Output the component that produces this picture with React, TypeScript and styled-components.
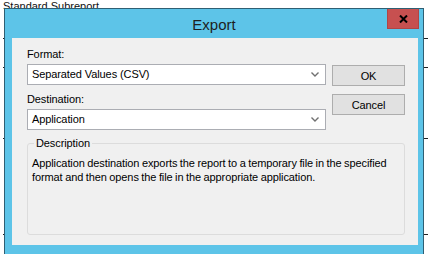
import React from 'react';
import styled, { createGlobalStyle } from 'styled-components';

const GlobalStyle = createGlobalStyle`
  html, body {
    margin: 0;
    padding: 0;
    background: #ffffff;
    overflow: hidden;
  }
  body {
    font-family: 'Liberation Sans', Arial, sans-serif;
  }
`;

const UI_FONT = `'Liberation Sans', Arial, sans-serif`;

const Screen = styled.div`
  position: relative;
  width: 428px;
  height: 254px;
  overflow: hidden;
  background: #ffffff;
`;

/* the report page that sits behind the dialog */
const Backdrop = styled.div`
  display: flex;
  flex-direction: column;
  padding: 0 0 0 3px;
`;

const BackdropTitle = styled.div`
  font-family: 'Liberation Sans', Arial, sans-serif;
  font-size: 11px;
  line-height: 12px;
  color: #111;
`;

const BackdropRow = styled.div<{ h: number }>`
  height: ${(p) => p.h}px;
  border-bottom: 1px solid #222;
`;

const Window = styled.div`
  position: absolute;
  left: 4px;
  top: 8px;
  width: 418px;
  height: 260px;
  border: 1px solid #2f5f73;
  background: #5dc4e8;
  display: flex;
  flex-direction: column;
`;

const TitleBar = styled.div`
  position: relative;
  height: 29px;
  display: flex;
  align-items: center;
  justify-content: center;
`;

const Title = styled.span`
  font-family: 'Liberation Sans', Arial, sans-serif;
  font-size: 15px;
  color: #1e1e1e;
  margin-top: 1px;
`;

const CloseButton = styled.div`
  position: absolute;
  right: 4px;
  top: 0;
  width: 32px;
  height: 20px;
  background: #c75050;
  border: 1px solid #b04545;
  border-top: none;
  box-sizing: border-box;
  display: flex;
  align-items: center;
  justify-content: center;
`;

const Client = styled.div`
  margin-left: 7px;
  width: 406px;
  height: 207px;
  background: #f0f0f0;
  box-sizing: border-box;
  padding: 9px 13px 0 15px;
  display: flex;
  flex-direction: column;
  font-family: ${UI_FONT};
  font-size: 11px;
  letter-spacing: -0.1px;
  color: #000;
`;

const TopSection = styled.div`
  display: flex;
  gap: 6px;
`;

const Fields = styled.div`
  width: 299px;
  display: flex;
  flex-direction: column;
`;

const FieldLabel = styled.label<{ gapBefore?: number }>`
  display: block;
  line-height: 15px;
  margin-top: ${(p) => p.gapBefore ?? 0}px;
  margin-bottom: 2px;
`;

const Combo = styled.div`
  height: 21px;
  box-sizing: border-box;
  border: 1px solid #abadb3;
  background: #ffffff;
  display: flex;
  align-items: center;
  justify-content: space-between;
  padding: 0 6px 0 4px;
`;

const ComboText = styled.span`
  line-height: 15px;
`;

const Buttons = styled.div`
  width: 73px;
  display: flex;
  flex-direction: column;
  gap: 8px;
  padding-top: 18px;
`;

const Button = styled.button`
  height: 21px;
  box-sizing: border-box;
  border: 1px solid #adadad;
  background: #e1e1e1;
  font-family: ${UI_FONT};
  font-size: 11px;
  letter-spacing: -0.1px;
  color: #000;
  padding: 0;
  cursor: default;
`;

const GroupBox = styled.fieldset`
  margin: 6px 0 0 0;
  width: 378px;
  height: 99px;
  box-sizing: border-box;
  border: 1px solid #dcdcdc;
  border-radius: 3px;
  padding: 0 4px;
`;

const Legend = styled.legend`
  margin-left: 2px;
  padding: 0 2px;
  line-height: 15px;
`;

const Description = styled.p`
  margin: 5px 0 0 0;
  line-height: 14px;
  word-spacing: -0.4px;
`;

const Chevron = () => (
  <svg width="8" height="5" viewBox="0 0 8 5">
    <path d="M0.5 0.5 L4 4 L7.5 0.5" fill="none" stroke="#707070" strokeWidth="1.4" />
  </svg>
);

const CloseGlyph = () => (
  <svg width="9" height="8" viewBox="0 0 9 8">
    <path d="M1 0.5 L8 7.5 M8 0.5 L1 7.5" stroke="#000" strokeWidth="2" />
  </svg>
);

const App: React.FC = () => {
  return (
    <Screen>
      <GlobalStyle />
      <Backdrop>
        <BackdropTitle>Standard Subreport</BackdropTitle>
        <BackdropRow h={26} />
        <BackdropRow h={28} />
        <BackdropRow h={70} />
        <BackdropRow h={95} />
      </Backdrop>
      <Window>
        <TitleBar>
          <Title>Export</Title>
          <CloseButton>
            <CloseGlyph />
          </CloseButton>
        </TitleBar>
        <Client>
          <TopSection>
            <Fields>
              <FieldLabel>Format:</FieldLabel>
              <Combo>
                <ComboText>Separated Values (CSV)</ComboText>
                <Chevron />
              </Combo>
              <FieldLabel gapBefore={7}>Destination:</FieldLabel>
              <Combo>
                <ComboText>Application</ComboText>
                <Chevron />
              </Combo>
            </Fields>
            <Buttons>
              <Button>OK</Button>
              <Button>Cancel</Button>
            </Buttons>
          </TopSection>
          <GroupBox>
            <Legend>Description</Legend>
            <Description>
              Application destination exports the report to a temporary file in the specified
              <br />
              format and then opens the file in the appropriate application.
            </Description>
          </GroupBox>
        </Client>
      </Window>
    </Screen>
  );
};

export default App;
